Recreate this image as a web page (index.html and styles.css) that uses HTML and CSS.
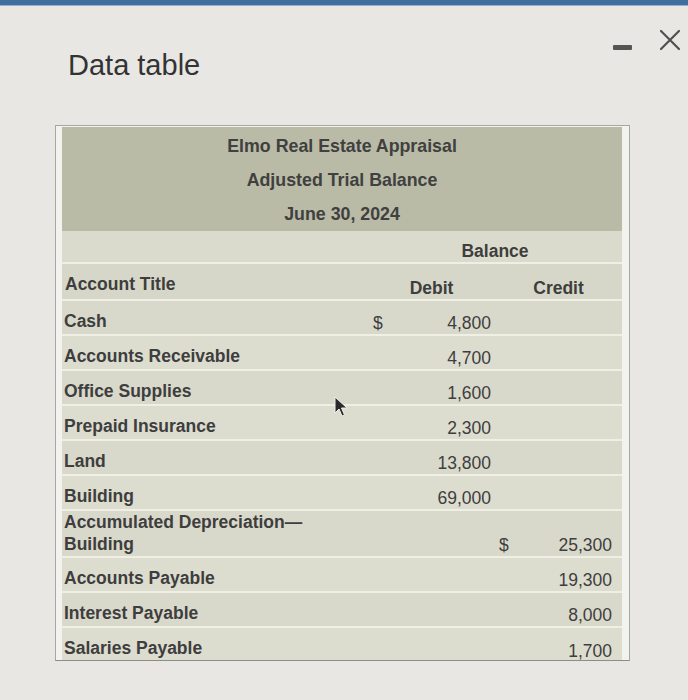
FILE: index.html
```html
<!DOCTYPE html>
<html lang="en">
<head>
<meta charset="utf-8">
<title>Data table</title>
<link rel="stylesheet" href="styles.css">
</head>
<body>
<div class="topbar"></div>
<div class="dialog">
  <header class="head">
    <h1 class="title">Data table</h1>
    <div class="controls">
      <span class="minimize"></span>
      <svg class="close" width="22" height="22" viewBox="0 0 22 22"><path d="M2 2 L20 20 M20 2 L2 20" stroke="#505050" stroke-width="2.2" stroke-linecap="round" fill="none"/></svg>
    </div>
  </header>
  <div class="frame">
    <table class="tb">
      <colgroup>
        <col class="c-title"><col class="c-d1"><col class="c-debit"><col class="c-d2"><col class="c-credit">
      </colgroup>
      <thead>
        <tr class="band"><th colspan="5">Elmo Real Estate Appraisal<br>Adjusted Trial Balance<br>June 30, 2024</th></tr>
        <tr class="bal"><th></th><th colspan="4" class="balance">Balance</th></tr>
        <tr class="cols"><th class="acct">Account Title</th><th colspan="2" class="dc">Debit</th><th colspan="2" class="dc">Credit</th></tr>
      </thead>
      <tbody>
        <tr><td class="lbl">Cash</td><td class="dol">$</td><td class="num">4,800</td><td></td><td></td></tr>
        <tr><td class="lbl">Accounts Receivable</td><td></td><td class="num">4,700</td><td></td><td></td></tr>
        <tr><td class="lbl">Office Supplies</td><td></td><td class="num">1,600</td><td></td><td></td></tr>
        <tr><td class="lbl">Prepaid Insurance</td><td></td><td class="num">2,300</td><td></td><td></td></tr>
        <tr><td class="lbl">Land</td><td></td><td class="num">13,800</td><td></td><td></td></tr>
        <tr><td class="lbl">Building</td><td></td><td class="num">69,000</td><td></td><td></td></tr>
        <tr class="tall"><td class="lbl two">Accumulated Depreciation—<br>Building</td><td></td><td></td><td class="dol">$</td><td class="num cr">25,300</td></tr>
        <tr><td class="lbl">Accounts Payable</td><td></td><td></td><td></td><td class="num cr">19,300</td></tr>
        <tr><td class="lbl">Interest Payable</td><td></td><td></td><td></td><td class="num cr">8,000</td></tr>
        <tr><td class="lbl">Salaries Payable</td><td></td><td></td><td></td><td class="num cr">1,700</td></tr>
      </tbody>
    </table>
    <svg class="cursor" width="14" height="22" viewBox="0 0 14 22"><path d="M1 1 L1 17 L5 13 L8 20 L10.5 19 L7.5 12 L13 12 Z" fill="#2a2a2a" stroke="#f0f0f0" stroke-width="1"/></svg>
  </div>
</div>
</body>
</html>
```
FILE: styles.css
```css
html, body {
  margin: 0;
  padding: 0;
}
body {
  background: #e8e7e3;
  font-family: "Liberation Sans", Arial, sans-serif;
  color: #3c3c3c;
  width: 688px;
  height: 700px;
  overflow: hidden;
}
.topbar {
  height: 5px;
  background: #3e6f9f;
  border-bottom: 1px solid #8fb0cf;
}
.dialog {
  padding: 0 0 0 55px;
}
.head {
  display: flex;
  justify-content: space-between;
  align-items: flex-start;
  height: 119px;
}
.title {
  margin: 43px 0 0 13px;
  font-size: 29px;
  font-weight: normal;
  color: #333;
}
.controls {
  display: flex;
  align-items: center;
  gap: 27px;
  margin: 23px 7px 0 0;
}
.minimize {
  display: block;
  width: 19px;
  height: 5px;
  border-radius: 1px;
  background: #555;
  margin-top: 14px;
}
.close {
  display: block;
}
.frame {
  position: relative;
  width: 560px;
  height: 533px;
  padding: 1px 7px 0 6px;
  background: #f2f2ef;
  border: 1px solid #a6a6a2;
  border-bottom-color: #8d8d88;
  overflow: hidden;
}
.tb {
  width: 560px;
  border-collapse: collapse;
  table-layout: fixed;
  font-size: 17.5px;
  color: #3e3e3e;
}
.c-title { width: 306px; }
.c-d1 { width: 27px; }
.c-debit { width: 100px; }
.c-d2 { width: 23px; }
.c-credit { width: 104px; }
.tb th, .tb td {
  padding: 0;
}
.band th {
  background: #b9bba6;
  font-weight: bold;
  font-size: 17.8px;
  line-height: 34px;
  padding: 2px 0 0;
  text-align: center;
  color: #404040;
}
.bal {
  height: 32px;
}
.bal th {
  background: #dbdbcd;
  vertical-align: bottom;
  padding-bottom: 0;
}
.balance {
  text-align: center;
}
.cols {
  height: 37px;
}
.cols th {
  background: #d6d7c8;
  border-top: 2px solid #efefe6;
}
.acct {
  text-align: left;
  padding-left: 3px !important;
  vertical-align: top;
  padding-top: 10px !important;
}
.dc {
  text-align: center;
  vertical-align: bottom;
}
.tb tbody tr {
  height: 35px;
  border-top: 2px solid #efefe6;
}
.tb tbody tr.tall {
  height: 47px;
}
.tb tbody tr:nth-child(odd) td {
  background: #d9d9cb;
}
.tb tbody tr:nth-child(even) td {
  background: #dcdccf;
}
.lbl {
  font-weight: bold;
  padding-left: 2px !important;
  padding-top: 10px !important;
  line-height: 20px;
  vertical-align: top;
  white-space: nowrap;
}
.two {
  line-height: 22px;
  padding-top: 0 !important;
}
.num {
  text-align: right;
  vertical-align: bottom;
  padding-right: 4px !important;
}
.num.cr {
  padding-right: 10px !important;
}
.dol {
  text-align: left;
  vertical-align: bottom;
  padding-left: 5px !important;
}
.tall .dol {
  padding-left: 4px !important;
}
.cursor {
  position: absolute;
  left: 278px;
  top: 270px;
}
```
